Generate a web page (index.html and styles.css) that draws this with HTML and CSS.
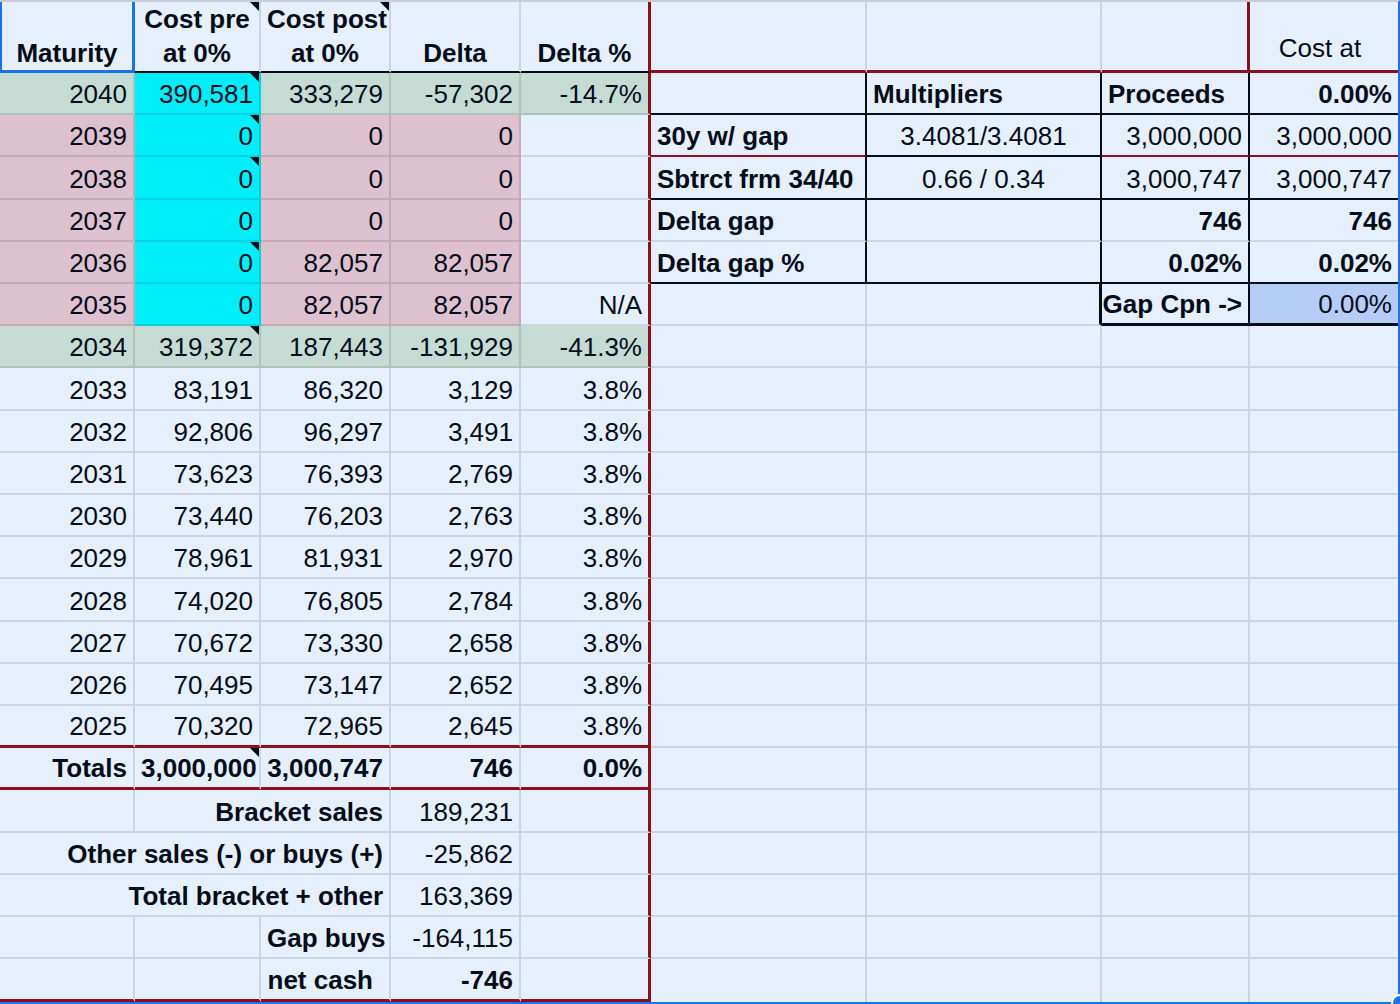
FILE: index.html
```html
<!DOCTYPE html>
<html>
<head>
<meta charset="utf-8">
<title>Sheet</title>
<link rel="stylesheet" href="styles.css">
</head>
<body>
<div class="sheet">
  <!-- header -->
  <div class="cell hd ctr b act">Maturity</div>
  <div class="cell hd ctr b bbk tri">Cost pre<br>at 0%</div>
  <div class="cell hd ctr b bbk tri">Cost post<br>at 0%</div>
  <div class="cell hd ctr b bbk">Delta</div>
  <div class="cell hd ctr b bbk rr">Delta %</div>
  <div class="cell hd bbr"></div>
  <div class="cell hd bbr"></div>
  <div class="cell hd bbr rr"></div>
  <div class="cell hd bbr ctr last costat">Cost at</div>

  <!-- 2040 -->
  <div class="cell g">2040</div><div class="cell cy tri">390,581</div><div class="cell g">333,279</div><div class="cell g">-57,302</div><div class="cell g rr">-14.7%</div>
  <div class="cell bbk brk"></div><div class="cell lft b bbk brk">Multipliers</div><div class="cell lft b bbk brk">Proceeds</div><div class="cell b bbk last">0.00%</div>

  <!-- 2039 -->
  <div class="cell p">2039</div><div class="cell cy tri">0</div><div class="cell p">0</div><div class="cell p">0</div><div class="cell rr"></div>
  <div class="cell lft b bbr2 brk">30y w/ gap</div><div class="cell ctr bbk brk">3.4081/3.4081</div><div class="cell bbr2 brk">3,000,000</div><div class="cell bbr2 last">3,000,000</div>

  <!-- 2038 -->
  <div class="cell p">2038</div><div class="cell cy tri">0</div><div class="cell p">0</div><div class="cell p">0</div><div class="cell rr"></div>
  <div class="cell lft b bbk brk">Sbtrct frm 34/40</div><div class="cell ctr bbk brk">0.66 / 0.34</div><div class="cell bbk brk">3,000,747</div><div class="cell bbk last">3,000,747</div>

  <!-- 2037 -->
  <div class="cell p">2037</div><div class="cell cy">0</div><div class="cell p">0</div><div class="cell p">0</div><div class="cell rr"></div>
  <div class="cell lft b brk">Delta gap</div><div class="cell brk"></div><div class="cell b brk">746</div><div class="cell b last">746</div>

  <!-- 2036 -->
  <div class="cell p">2036</div><div class="cell cy tri">0</div><div class="cell p">82,057</div><div class="cell p">82,057</div><div class="cell rr"></div>
  <div class="cell lft b bbk brk">Delta gap %</div><div class="cell bbk brk"></div><div class="cell b bbk brk">0.02%</div><div class="cell b bbk last">0.02%</div>

  <!-- 2035 -->
  <div class="cell p">2035</div><div class="cell cy">0</div><div class="cell p">82,057</div><div class="cell p">82,057</div><div class="cell rr">N/A</div>
  <div class="cell"></div><div class="cell brk3"></div><div class="cell b bbk3 brk gap">Gap Cpn -&gt;</div><div class="cell lb bbk3 last">0.00%</div>

  <!-- 2034 -->
  <div class="cell g">2034</div><div class="cell g tri">319,372</div><div class="cell g">187,443</div><div class="cell g">-131,929</div><div class="cell g rr">-41.3%</div>
  <div class="cell"></div><div class="cell"></div><div class="cell"></div><div class="cell last"></div>

  <!-- 2033 -->
  <div class="cell">2033</div><div class="cell">83,191</div><div class="cell">86,320</div><div class="cell">3,129</div><div class="cell rr">3.8%</div>
  <div class="cell"></div><div class="cell"></div><div class="cell"></div><div class="cell last"></div>

  <!-- 2032 -->
  <div class="cell">2032</div><div class="cell">92,806</div><div class="cell">96,297</div><div class="cell">3,491</div><div class="cell rr">3.8%</div>
  <div class="cell"></div><div class="cell"></div><div class="cell"></div><div class="cell last"></div>

  <!-- 2031 -->
  <div class="cell">2031</div><div class="cell">73,623</div><div class="cell">76,393</div><div class="cell">2,769</div><div class="cell rr">3.8%</div>
  <div class="cell"></div><div class="cell"></div><div class="cell"></div><div class="cell last"></div>

  <!-- 2030 -->
  <div class="cell">2030</div><div class="cell">73,440</div><div class="cell">76,203</div><div class="cell">2,763</div><div class="cell rr">3.8%</div>
  <div class="cell"></div><div class="cell"></div><div class="cell"></div><div class="cell last"></div>

  <!-- 2029 -->
  <div class="cell">2029</div><div class="cell">78,961</div><div class="cell">81,931</div><div class="cell">2,970</div><div class="cell rr">3.8%</div>
  <div class="cell"></div><div class="cell"></div><div class="cell"></div><div class="cell last"></div>

  <!-- 2028 -->
  <div class="cell">2028</div><div class="cell">74,020</div><div class="cell">76,805</div><div class="cell">2,784</div><div class="cell rr">3.8%</div>
  <div class="cell"></div><div class="cell"></div><div class="cell"></div><div class="cell last"></div>

  <!-- 2027 -->
  <div class="cell">2027</div><div class="cell">70,672</div><div class="cell">73,330</div><div class="cell">2,658</div><div class="cell rr">3.8%</div>
  <div class="cell"></div><div class="cell"></div><div class="cell"></div><div class="cell last"></div>

  <!-- 2026 -->
  <div class="cell">2026</div><div class="cell">70,495</div><div class="cell">73,147</div><div class="cell">2,652</div><div class="cell rr">3.8%</div>
  <div class="cell"></div><div class="cell"></div><div class="cell"></div><div class="cell last"></div>

  <!-- 2025 -->
  <div class="cell bbr">2025</div><div class="cell bbr">70,320</div><div class="cell bbr">72,965</div><div class="cell bbr">2,645</div><div class="cell bbr rr">3.8%</div>
  <div class="cell"></div><div class="cell"></div><div class="cell"></div><div class="cell last"></div>

  <!-- Totals -->
  <div class="cell b bbr">Totals</div><div class="cell b bbr tri">3,000,000</div><div class="cell b bbr">3,000,747</div><div class="cell b bbr">746</div><div class="cell b bbr rr">0.0%</div>
  <div class="cell"></div><div class="cell"></div><div class="cell"></div><div class="cell last"></div>

  <!-- Bracket sales -->
  <div class="cell"></div><div class="cell b s2">Bracket sales</div><div class="cell">189,231</div><div class="cell rr"></div>
  <div class="cell"></div><div class="cell"></div><div class="cell"></div><div class="cell last"></div>

  <!-- Other sales -->
  <div class="cell b s3">Other sales (-) or buys (+)</div><div class="cell">-25,862</div><div class="cell rr"></div>
  <div class="cell"></div><div class="cell"></div><div class="cell"></div><div class="cell last"></div>

  <!-- Total bracket -->
  <div class="cell b s3">Total bracket + other</div><div class="cell">163,369</div><div class="cell rr"></div>
  <div class="cell"></div><div class="cell"></div><div class="cell"></div><div class="cell last"></div>

  <!-- Gap buys -->
  <div class="cell"></div><div class="cell"></div><div class="cell b">Gap buys</div><div class="cell">-164,115</div><div class="cell rr"></div>
  <div class="cell"></div><div class="cell"></div><div class="cell"></div><div class="cell last"></div>

  <!-- net cash -->
  <div class="cell bbr"></div><div class="cell bbr"></div><div class="cell b bbr net">net cash</div><div class="cell b bbr">-746</div><div class="cell bbr rr"></div>
  <div class="cell nb"></div><div class="cell nb"></div><div class="cell nb"></div><div class="cell nb last"></div>
</div>
</body>
</html>
```

FILE: styles.css
```css
* {
  box-sizing: border-box;
}

html,
body {
  margin: 0;
  background: #e6effc;
}

body {
  font-family: "Liberation Sans", Arial, sans-serif;
  font-size: 26px;
  color: #030c19;
}

.sheet {
  position: relative;
  width: 1400px;
  height: 1004px;
  display: grid;
  grid-template-columns: 135px 126px 130px 130px 130px 216px 235px 148px 148px;
  grid-template-rows: 71px 42px 42px 43px 42px 42px 42px 42px 43px 42px 42px 42px 42px 43px 42px 42px 42px 42px 43px 42px 42px 42px 43px;
  border-top: 2px solid #c6ccd6;
  border-right: 2px solid #1a73e8;
  border-bottom: 2px solid #1a73e8;
  background: #e6effc;
}

.sheet::after {
  content: "";
  position: absolute;
  left: 1391px;
  top: 992px;
  width: 14px;
  height: 14px;
  border-radius: 50%;
  background: #1a73e8;
  border: 2px solid #ffffff;
}

.cell {
  position: relative;
  display: flex;
  flex-direction: column;
  justify-content: flex-end;
  min-width: 0;
  padding: 0 6px 2px;
  line-height: 34px;
  text-align: right;
  white-space: nowrap;
  border-right: 2px solid rgba(0, 0, 0, 0.11);
  border-bottom: 2px solid rgba(0, 0, 0, 0.11);
}

.hd {
  padding-bottom: 1px;
}

.b {
  font-weight: 700;
}

.ctr {
  text-align: center;
}

.lft {
  text-align: left;
}

.g {
  background: #c5dcd5;
}

.p {
  background: #ddc1ce;
}

.cy {
  background: #00eefa;
}

.lb {
  background: #b5cdf6;
}

.bbk {
  border-bottom: 2px solid #030c19;
}

.bbk3 {
  border-bottom: 3px solid #030c19;
}

.brk {
  border-right: 2px solid #030c19;
}

.brk3 {
  border-right: 3px solid #030c19;
}

.bbr {
  border-bottom: 3px solid #8b0f1c;
}

.bbr2 {
  border-bottom: 2px solid #8b0f1c;
}

.rr {
  border-right: 3px solid #8b0f1c;
}

.last {
  border-right: 0;
}

.nb {
  border-bottom: 0;
}

.s2 {
  grid-column: span 2;
}

.s3 {
  grid-column: span 3;
}

.act {
  border-left: 2px solid #1a73e8;
  border-right: 3px solid #1a73e8;
  border-bottom: 3px solid #1a73e8;
  padding-bottom: 0;
}

.costat {
  font-weight: 400;
  padding-right: 14px;
  padding-bottom: 5px;
}

.net {
  padding-right: 16px;
}

.gap {
  padding-left: 0;
  padding-right: 6px;
}

.tri::after {
  content: "";
  position: absolute;
  top: 0;
  right: 0;
  width: 0;
  height: 0;
  border-top: 9px solid #030c19;
  border-left: 9px solid transparent;
}
```
